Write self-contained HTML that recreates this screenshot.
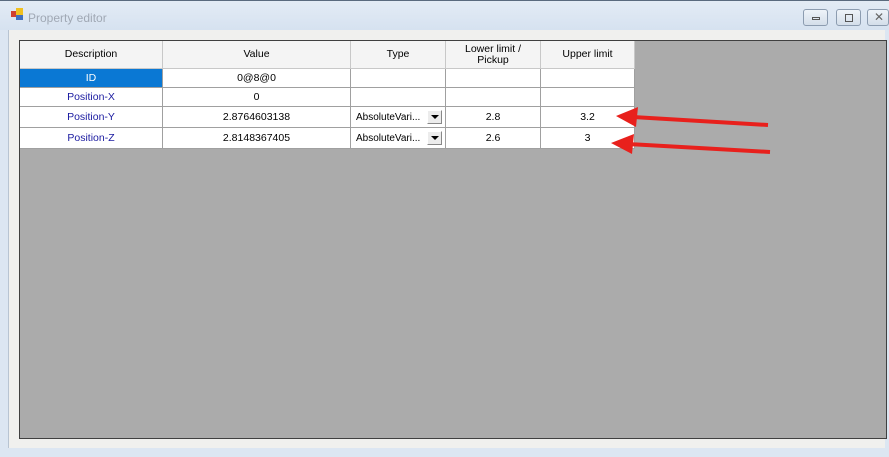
<!DOCTYPE html>
<html><head><meta charset="utf-8"><style>
*{margin:0;padding:0;box-sizing:border-box}
body{width:889px;height:457px;overflow:hidden;background:#dce6f2;font-family:"Liberation Sans",sans-serif;position:relative}
.top{position:absolute;left:0;top:0;width:889px;height:30px;background:linear-gradient(#e3ebf5,#d6e2f0);border-top:1px solid #5a6a7e}
.title{position:absolute;left:28px;top:11px;font-size:12px;color:#a0a8b4}
.client{position:absolute;left:8px;top:30px;width:877px;height:418px;background:#f0f0ee;border-left:1px solid #b8c4d2}
.grid{position:absolute;left:19px;top:40px;width:868px;height:399px;background:#ababab;border:1px solid #404040}
.c{position:absolute;font-size:10.5px;text-align:center;display:flex;align-items:center;justify-content:center;background:#fff;border-right:1px solid #a0a0a0;border-bottom:1px solid #a0a0a0;color:#000}
.h{background:#f4f4f4;border-right:1px solid #c8c8c8;border-bottom:1px solid #c8c8c8;line-height:11px}
.d{color:#1a1aa0}
.btn{position:absolute;top:9px;width:25px;height:17px;border:1px solid #8c9cb0;border-radius:3px;background:linear-gradient(#eef3f9,#d4deea)}
.dd{position:absolute;width:15px;height:14px;background:#ececec;border:1px solid #888;border-top-color:#fff;border-left-color:#fff}
.dd:after{content:"";position:absolute;left:3px;top:4px;border-left:4px solid transparent;border-right:4px solid transparent;border-top:4px solid #000}
</style></head><body>
<div class="top"></div>
<div style="position:absolute;left:11px;top:11px;width:6px;height:6px;background:#d04030"></div>
<div style="position:absolute;left:16px;top:8px;width:7px;height:7px;background:#f0c020"></div>
<div style="position:absolute;left:16px;top:15px;width:7px;height:5px;background:#4070c0"></div>
<div class="title">Property editor</div>
<div class="btn" style="left:803px"><div style="position:absolute;left:8px;top:7px;width:8px;height:3px;border:1px solid #555"></div></div>
<div class="btn" style="left:836px"><div style="position:absolute;left:8px;top:4px;width:8px;height:8px;border:1px solid #555"></div></div>
<div class="btn" style="left:867px;width:22px"><span style="position:absolute;left:6px;top:0;font-size:12px;color:#666">✕</span></div>
<div class="client"></div>
<div class="grid">
<div class="c h" style="left:0;top:0;width:143px;height:28px">Description</div>
<div class="c h" style="left:143px;top:0;width:188px;height:28px">Value</div>
<div class="c h" style="left:331px;top:0;width:95px;height:28px">Type</div>
<div class="c h" style="left:426px;top:0;width:95px;height:28px">Lower limit /<br>Pickup</div>
<div class="c h" style="left:521px;top:0;width:94px;height:28px">Upper limit</div>

<div class="c" style="left:0;top:28px;width:143px;height:19px;background:#0a78d4;color:#fff">ID</div>
<div class="c" style="left:143px;top:28px;width:188px;height:19px">0@8@0</div>
<div class="c" style="left:331px;top:28px;width:95px;height:19px"></div>
<div class="c" style="left:426px;top:28px;width:95px;height:19px"></div>
<div class="c" style="left:521px;top:28px;width:94px;height:19px"></div>

<div class="c d" style="left:0;top:47px;width:143px;height:19px">Position-X</div>
<div class="c" style="left:143px;top:47px;width:188px;height:19px">0</div>
<div class="c" style="left:331px;top:47px;width:95px;height:19px"></div>
<div class="c" style="left:426px;top:47px;width:95px;height:19px"></div>
<div class="c" style="left:521px;top:47px;width:94px;height:19px"></div>

<div class="c d" style="left:0;top:66px;width:143px;height:21px">Position-Y</div>
<div class="c" style="left:143px;top:66px;width:188px;height:21px">2.8764603138</div>
<div class="c" style="left:331px;top:66px;width:95px;height:21px;justify-content:flex-start;padding-left:5px;font-size:10px">AbsoluteVari...</div>
<div class="dd" style="left:407px;top:69px"></div>
<div class="c" style="left:426px;top:66px;width:95px;height:21px">2.8</div>
<div class="c" style="left:521px;top:66px;width:94px;height:21px">3.2</div>

<div class="c d" style="left:0;top:87px;width:143px;height:21px">Position-Z</div>
<div class="c" style="left:143px;top:87px;width:188px;height:21px">2.8148367405</div>
<div class="c" style="left:331px;top:87px;width:95px;height:21px;justify-content:flex-start;padding-left:5px;font-size:10px">AbsoluteVari...</div>
<div class="dd" style="left:407px;top:90px"></div>
<div class="c" style="left:426px;top:87px;width:95px;height:21px">2.6</div>
<div class="c" style="left:521px;top:87px;width:94px;height:21px">3</div>
</div>
<svg style="position:absolute;left:0;top:0" width="889" height="457">
<line x1="768" y1="125" x2="632" y2="117" stroke="#e8201c" stroke-width="4"/>
<polygon points="616,116 638,107 636,127" fill="#e8201c"/>
<line x1="770" y1="152" x2="628" y2="144" stroke="#e8201c" stroke-width="4"/>
<polygon points="611,143 634,134 632,154" fill="#e8201c"/>
</svg>
</body></html>
